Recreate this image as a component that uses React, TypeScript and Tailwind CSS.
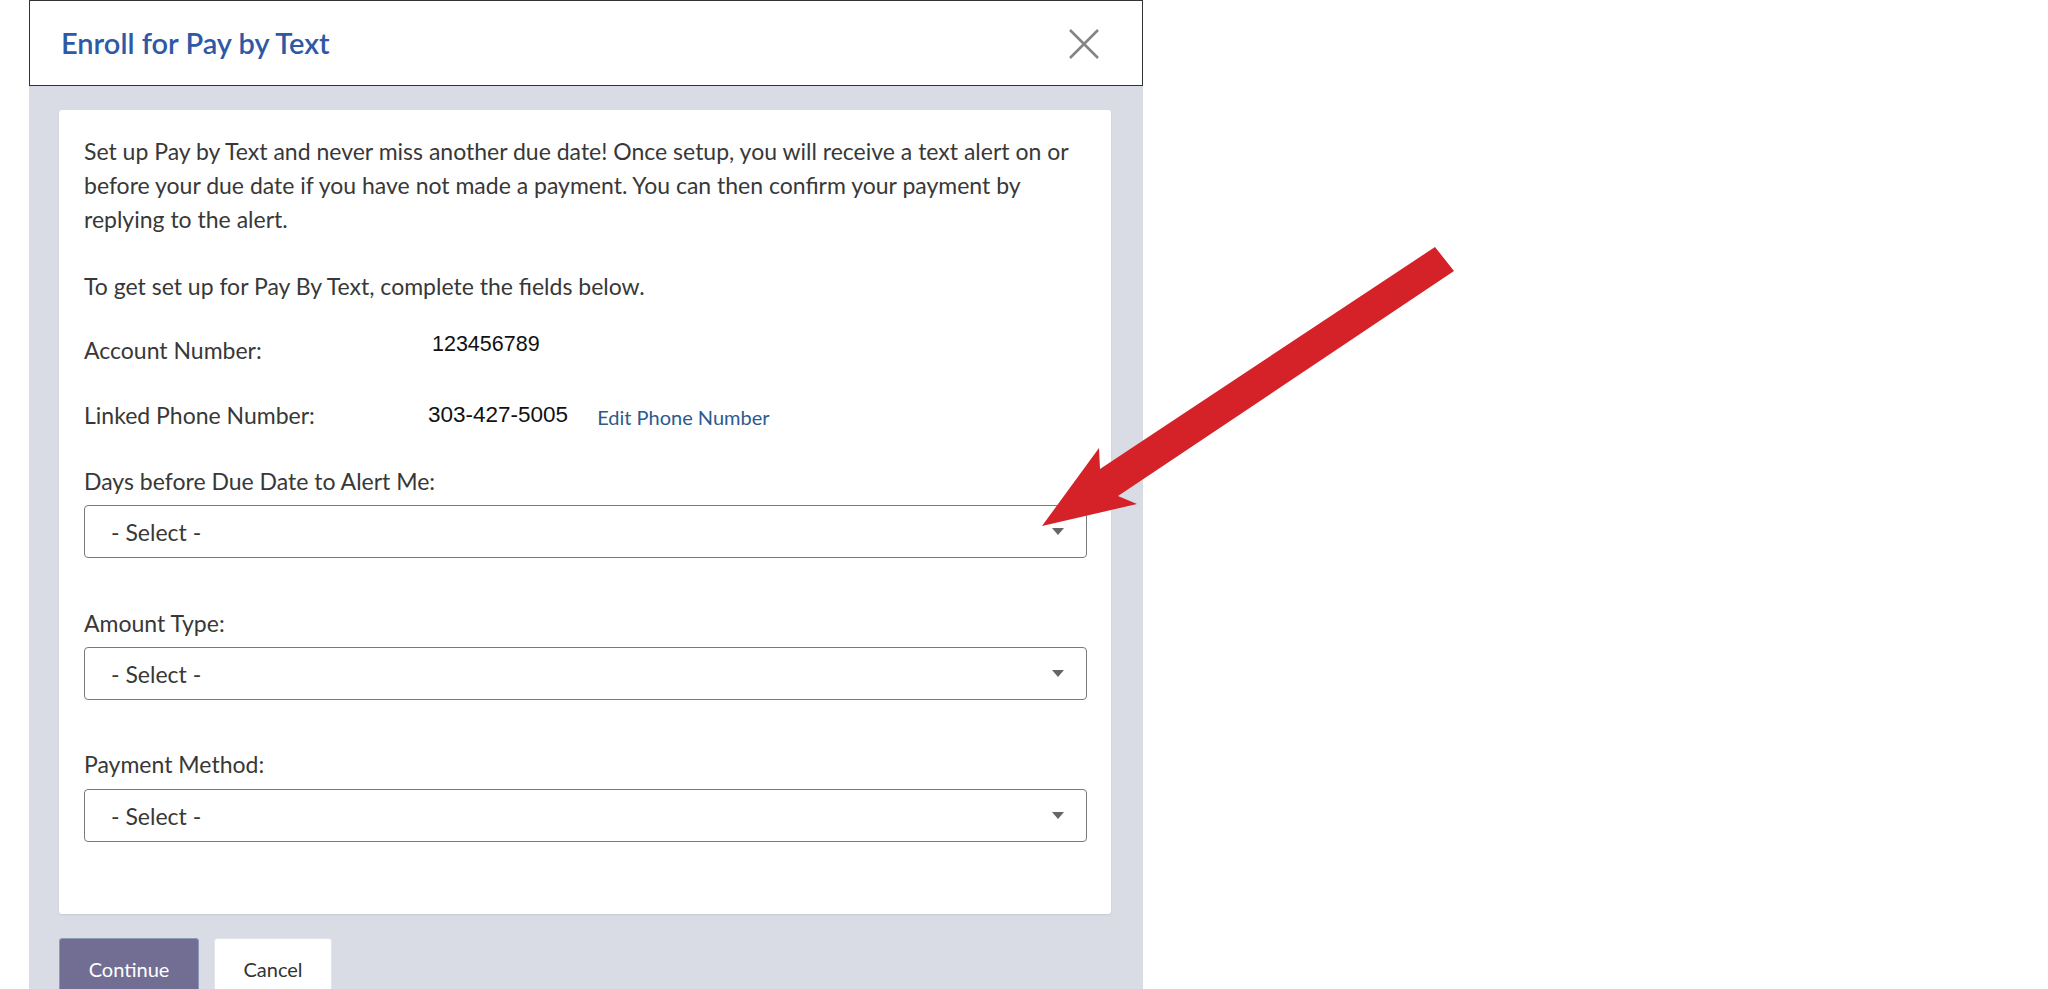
import React from "react";

function Caret() {
  return (
    <svg width="12" height="7" viewBox="0 0 12 7" className="shrink-0">
      <path d="M0 0h12L6 7z" fill="#666" />
    </svg>
  );
}

function FakeSelect() {
  return (
    <div className="flex h-[53px] items-center justify-between rounded-[4px] border border-[#7a7a7a] bg-white pl-[26px] pr-[22px]">
      <span>- Select -</span>
      <Caret />
    </div>
  );
}

export default function App() {
  return (
    <div className="relative h-screen w-full overflow-hidden bg-white font-['Lato',sans-serif]">
      <div className="ml-[29px] flex h-full w-[1114px] flex-col bg-[#d9dce4]">
        <header className="flex h-[86px] shrink-0 items-center justify-between border border-[#333] bg-white pl-[31px] pr-[42px]">
          <h1 className="text-[29px] font-semibold text-[#2e59a5]">Enroll for Pay by Text</h1>
          <svg width="32" height="32" viewBox="0 0 32 32" className="mt-[2px]">
            <path d="M2 2L30 30M30 2L2 30" stroke="#858585" strokeWidth="2.6" />
          </svg>
        </header>

        <div className="pl-[30px] pr-[32px] pt-[24px]">
          <div className="rounded-[3px] bg-white pb-[72px] pl-[25px] pr-[24px] pt-[24px] text-[23px] leading-[34px] text-[#383838] shadow-[0_1px_2px_rgba(0,0,0,0.08)]">
            <p>
              Set up Pay by Text and never miss another due date! Once setup, you will receive a text alert on or
              before your due date if you have not made a payment. You can then confirm your payment by replying to
              the alert.
            </p>
            <p className="mt-[33px]">To get set up for Pay By Text, complete the fields below.</p>

            <div className="mt-[30px] flex h-[34px] items-center">
              <span className="w-[348px] shrink-0">Account Number:</span>
              <span className="mb-[12px] font-['Liberation_Sans',sans-serif] text-[21.5px] text-[#111]">123456789</span>
            </div>
            <div className="mt-[31px] flex h-[34px] items-center">
              <span className="w-[344px] shrink-0">Linked Phone Number:</span>
              <span className="font-['Liberation_Sans',sans-serif] text-[22.5px] text-[#111]">303-427-5005</span>
              <span className="ml-[29px] mt-[4px] text-[20px] text-[#2c5a8c]">Edit Phone Number</span>
            </div>

            <div className="mt-[32px]">Days before Due Date to Alert Me:</div>
            <div className="mt-[7px]">
              <FakeSelect />
            </div>

            <div className="mt-[48px]">Amount Type:</div>
            <div className="mt-[7px]">
              <FakeSelect />
            </div>

            <div className="mt-[47px]">Payment Method:</div>
            <div className="mt-[8px]">
              <FakeSelect />
            </div>
          </div>

          <div className="mt-[24px] flex gap-[15px]">
            <button className="h-[62px] w-[140px] rounded-t-[3px] border border-[#8a9ab8] bg-[#726e93] text-[20px] text-white">
              Continue
            </button>
            <button className="h-[62px] w-[118px] rounded-t-[3px] border border-[#e2e4ea] bg-white text-[20px] text-[#333]">
              Cancel
            </button>
          </div>
        </div>
      </div>

      <svg className="pointer-events-none absolute inset-0 h-full w-full" viewBox="0 0 2048 989">
        <polygon
          points="1435,247 1454,271 1118,496 1137,504 1042,526 1099,448 1100,469"
          fill="#d42228"
        />
      </svg>
    </div>
  );
}
